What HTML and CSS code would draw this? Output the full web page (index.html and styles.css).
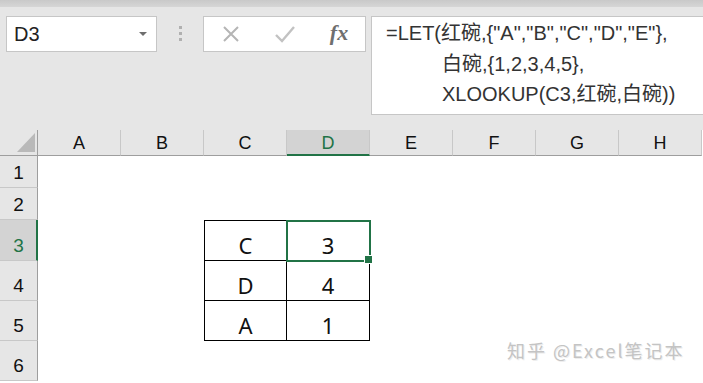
FILE: index.html
```html
<!DOCTYPE html>
<html lang="zh-CN">
<head>
    <meta charset="UTF-8">
    <meta name="viewport" content="width=device-width, initial-scale=1.0">
    <title>LET + XLOOKUP</title>
    <link rel="stylesheet" href="styles.css">
</head>
<body>
    <div class="topbar"></div>

    <!-- Formula bar -->
    <div class="toolbar">
        <div class="namebox">
            <span>D3</span>
            <span class="arrow"></span>
        </div>
        <div class="grip">
            <span></span><span></span><span></span>
        </div>
        <div class="buttons">
            <svg width="18" height="16" viewBox="0 0 18 16">
                <path d="M2 1 L16 15 M16 1 L2 15" stroke="#b5b5b5" stroke-width="2" fill="none"/>
            </svg>
            <svg width="20" height="17" viewBox="0 0 20 17">
                <path d="M1 9 L7 15 L19 1" stroke="#c2c2c2" stroke-width="2.4" fill="none"/>
            </svg>
            <span class="fx">fx</span>
        </div>
        <div class="formula">
            <div class="line">=LET(红碗,{"A","B","C","D","E"},</div>
            <div class="line indent">白碗,{1,2,3,4,5},</div>
            <div class="line indent">XLOOKUP(C3,红碗,白碗))</div>
        </div>
    </div>

    <!-- Worksheet -->
    <div class="sheet">
        <div class="corner">
            <svg width="38" height="26" viewBox="0 0 38 26">
                <polygon points="35,3 35,22 17,22" fill="#b9b9b9"/>
            </svg>
        </div>
        <div class="colhead">A</div>
        <div class="colhead">B</div>
        <div class="colhead">C</div>
        <div class="colhead sel">D</div>
        <div class="colhead">E</div>
        <div class="colhead">F</div>
        <div class="colhead">G</div>
        <div class="colhead">H</div>

        <div class="rowhead">1</div>
        <div class="cell"></div><div class="cell"></div><div class="cell"></div><div class="cell"></div>
        <div class="cell"></div><div class="cell"></div><div class="cell"></div><div class="cell"></div>

        <div class="rowhead">2</div>
        <div class="cell"></div><div class="cell"></div><div class="cell"></div><div class="cell"></div>
        <div class="cell"></div><div class="cell"></div><div class="cell"></div><div class="cell"></div>

        <div class="rowhead sel">3</div>
        <div class="cell"></div><div class="cell"></div>
        <div class="cell box first top">C</div>
        <div class="cell box top active">3</div>
        <div class="cell"></div><div class="cell"></div><div class="cell"></div><div class="cell"></div>

        <div class="rowhead">4</div>
        <div class="cell"></div><div class="cell"></div>
        <div class="cell box first">D</div>
        <div class="cell box">4</div>
        <div class="cell"></div><div class="cell"></div><div class="cell"></div><div class="cell"></div>

        <div class="rowhead">5</div>
        <div class="cell"></div><div class="cell"></div>
        <div class="cell box first">A</div>
        <div class="cell box">1</div>
        <div class="cell"></div><div class="cell"></div><div class="cell"></div><div class="cell"></div>

        <div class="rowhead">6</div>
        <div class="cell"></div><div class="cell"></div><div class="cell"></div><div class="cell"></div>
        <div class="cell"></div><div class="cell"></div><div class="cell"></div><div class="cell"></div>

        <div class="watermark">知乎 @Excel笔记本</div>
    </div>
</body>
</html>
```

FILE: styles.css
```css
/* Page */
* {
    box-sizing: border-box;
}
body {
    margin: 0;
    width: 703px;
    height: 383px;
    overflow: hidden;
    background: #fff;
    font-family: "Liberation Sans", Arial, sans-serif;
    color: #000;
}
.topbar {
    height: 7px;
    background: linear-gradient(#c9c9c9, #d6d6d6);
}

/* Formula bar */
.toolbar {
    display: flex;
    align-items: flex-start;
    height: 123px;
    padding: 9px 0 0 6px;
    background: #e6e6e6;
}
.namebox {
    display: flex;
    align-items: center;
    justify-content: space-between;
    width: 151px;
    height: 36px;
    padding: 0 9px 0 7px;
    background: #fff;
    border: 1px solid #c6c6c6;
    font-size: 20px;
    color: #222;
}
.arrow {
    width: 0;
    height: 0;
    border-left: 4px solid transparent;
    border-right: 4px solid transparent;
    border-top: 4px solid #6e6e6e;
}
.grip {
    display: flex;
    flex-direction: column;
    align-items: center;
    gap: 3px;
    width: 46px;
    padding-top: 10px;
}
.grip span {
    width: 3px;
    height: 3px;
    background: #b0b0b0;
}
.buttons {
    display: grid;
    grid-template-columns: 54px 54px 54px;
    align-items: center;
    justify-items: center;
    width: 163px;
    height: 36px;
    background: #fff;
    border: 1px solid #c6c6c6;
}
.fx {
    font-family: "Liberation Serif", "Times New Roman", serif;
    font-style: italic;
    font-weight: bold;
    font-size: 22px;
    color: #6f6f6f;
    margin-top: -3px;
}
.formula {
    flex: 1;
    height: 99px;
    margin-left: 5px;
    margin-right: -10px;
    padding-left: 14px;
    background: #fff;
    border: 1px solid #c6c6c6;
    font-family: "Liberation Sans", Arial, "Noto Sans CJK SC", sans-serif;
    font-size: 20px;
    color: #333;
}
.line {
    height: 31px;
    line-height: 31px;
    white-space: nowrap;
}
.line:first-child {
    margin-top: 1px;
}
.line + .line {
    height: 30px;
}
.indent {
    padding-left: 56px;
}

/* Worksheet */
.sheet {
    position: relative;
    display: grid;
    grid-template-columns: 38px repeat(8, 83px);
    grid-template-rows: 26px 32px 32px 41px 40px 40px 40px;
}
.corner {
    background: #e6e6e6;
    border-bottom: 1px solid #9e9e9e;
    border-right: 1px solid #9e9e9e;
}
.corner svg {
    display: block;
}
.colhead {
    display: flex;
    align-items: flex-end;
    justify-content: center;
    padding-bottom: 3px;
    background: #e6e6e6;
    border-right: 1px solid #c8c8c8;
    border-bottom: 1px solid #9e9e9e;
    font-size: 18px;
    line-height: 1;
    color: #111;
}
.colhead.sel {
    background: #d3d3d3;
    color: #217346;
    border-bottom: 2px solid #217346;
    padding-bottom: 2px;
}
.rowhead {
    display: flex;
    align-items: flex-end;
    justify-content: center;
    padding-bottom: 5px;
    background: #e6e6e6;
    border-right: 1px solid #9e9e9e;
    border-bottom: 1px solid #c8c8c8;
    font-size: 19px;
    line-height: 1;
    color: #111;
}
.rowhead.sel {
    background: #d3d3d3;
    color: #217346;
    border-right: 2px solid #217346;
    padding-left: 1px;
}
.cell {
    display: flex;
    align-items: flex-end;
    justify-content: center;
    padding-bottom: 4px;
    font-family: "Noto Sans", "Open Sans", sans-serif;
    font-size: 22px;
    line-height: 1;
    color: #111;
}
.cell.box {
    border-right: 1px solid #000;
    border-bottom: 1px solid #000;
}
.cell.first {
    border-left: 1px solid #000;
}
.cell.top {
    border-top: 1px solid #000;
}
.cell.active {
    position: relative;
    z-index: 1;
}
.cell.active::before {
    content: "";
    position: absolute;
    left: -1px;
    top: -1px;
    right: -2px;
    bottom: -2px;
    border: 2px solid #217346;
}
.cell.active::after {
    content: "";
    position: absolute;
    right: -4px;
    bottom: -4px;
    width: 7px;
    height: 7px;
    background: #217346;
    border: 1px solid #fff;
}
.watermark {
    position: absolute;
    left: 507px;
    top: 207px;
    font-family: "Noto Sans CJK SC", sans-serif;
    font-size: 18px;
    color: #c4c4c4;
    text-shadow: 1px 1px 0 #eeeeee;
    letter-spacing: 2px;
}
```
